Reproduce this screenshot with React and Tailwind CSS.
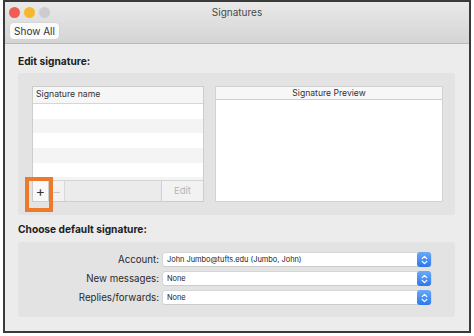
import React from "react";

const font = { fontFamily: '"Inter", "Liberation Sans", sans-serif' };

function Select({ value }) {
  return (
    <div className="flex h-[13px] w-[268px] items-center rounded-[2px] bg-white shadow-[0_0_0_0.5px_#c9c9c9,0_1px_0_#cfcfcf]">
      <span className="flex-1 truncate pl-[4px] text-[7.4px] leading-[13px] text-[#222]">{value}</span>
      <div className="flex h-[15px] w-[14px] items-center justify-center rounded-[3px] bg-gradient-to-b from-[#6aa9f8] to-[#2a78ee]">
        <svg width="7" height="10" viewBox="0 0 7 10" fill="none" stroke="white" strokeWidth="1.3" strokeLinecap="round" strokeLinejoin="round">
          <path d="M1.2 3.6 L3.5 1.4 L5.8 3.6" />
          <path d="M1.2 6.4 L3.5 8.6 L5.8 6.4" />
        </svg>
      </div>
    </div>
  );
}

export default function App() {
  const rows = [
    { h: "h-[15px]", bg: "bg-white" },
    { h: "h-[14px]", bg: "bg-[#f4f4f4]" },
    { h: "h-[15px]", bg: "bg-white" },
    { h: "h-[15px]", bg: "bg-[#f4f4f4]" },
    { h: "h-[14px]", bg: "bg-white" },
    { h: "h-[3px]", bg: "bg-[#f4f4f4]" },
  ];
  return (
    <div className="h-[336px] w-[474px] bg-white" style={font}>
      <div className="ml-[3px] flex h-[333px] w-[468px] flex-col border-2 border-[#3a3a3a] bg-[#ececec]">
        {/* Title + toolbar */}
        <div className="flex h-[42px] flex-col border-b border-[#b9b9b9] bg-gradient-to-b from-[#e9e9e9] to-[#d4d4d4]">
          <div className="grid h-[19px] grid-cols-[1fr_auto_1fr] items-center">
            <div className="flex gap-[4px] pl-[4px] pt-[1px]">
              <span className="h-[11px] w-[11px] rounded-full bg-[#f05b53]" />
              <span className="h-[11px] w-[11px] rounded-full bg-[#f6b730]" />
              <span className="h-[11px] w-[11px] rounded-full bg-[#cdcdcd]" />
            </div>
            <div className="text-[10px] leading-[16px] text-[#4a4a4a]">Signatures</div>
            <div />
          </div>
          <div className="flex pl-[5px] pt-[2px]">
            <div className="flex h-[16px] w-[49px] items-center justify-center rounded-[4px] bg-[#fbfbfb] text-[10px] text-[#333] shadow-[0_0_0_0.5px_#cfcfcf]">
              Show All
            </div>
          </div>
        </div>

        {/* Content */}
        <div className="flex flex-col pl-[13px] pr-[14px]">
          <div className="pt-[9px] text-[10.2px] font-bold leading-[16px] text-[#222]">Edit signature:</div>
          <div className="relative mt-[4px] flex h-[142px] gap-[11px] rounded-[3px] bg-[#e3e3e3] pl-[14px] pr-[12px] pt-[13px]">
            {/* Signature list */}
            <div className="flex h-[116px] w-[172px] flex-col border border-[#cdcdcd] bg-white">
              <div className="flex h-[17px] items-center border-b border-[#d6d6d6] bg-[#f6f6f6] pl-[3px] text-[8.7px] text-[#333]">
                Signature name
              </div>
              {rows.map((r, i) => (
                <div key={i} className={`${r.h} ${r.bg}`} />
              ))}
              <div className="flex flex-1 items-stretch border-t border-[#d4d4d4] bg-[#ebebeb]">
                <div className="flex w-[16px] items-center justify-center border-r border-[#cfcfcf] bg-[#f8f8f8] text-[14px] leading-none text-[#333]">
                  +
                </div>
                <div className="flex w-[16px] items-center justify-center border-r border-[#d8d8d8] bg-[#f2f2f2] text-[13px] leading-none text-[#c4c4c4]">
                  −
                </div>
                <div className="flex-1" />
                <div className="flex w-[42px] items-center justify-center border-l border-[#d0d0d0] bg-[#f2f2f2] text-[9.5px] text-[#b5b5b5]">
                  Edit
                </div>
              </div>
            </div>
            {/* Preview */}
            <div className="flex h-[116px] w-[228px] flex-col border border-[#d2d2d2] bg-white">
              <div className="flex h-[13px] items-center justify-center border-b border-[#cfcfcf] bg-[#f7f7f7] text-[8.6px] text-[#333]">
                Signature Preview
              </div>
              <div className="flex-1" />
            </div>
            {/* Highlight */}
            <div className="absolute left-[7px] top-[104px] h-[35px] w-[28px] border-4 border-[#ec7a2c]" />
          </div>

          <div className="mt-[6px] text-[10.2px] font-bold leading-[16px] text-[#222]">Choose default signature:</div>
          <div className="mt-[5px] flex h-[75px] flex-col gap-[6px] rounded-[3px] bg-[#e3e3e3] pt-[11px]">
            {[
              ["Account:", "John Jumbo@tufts.edu (Jumbo, John)"],
              ["New messages:", "None"],
              ["Replies/forwards:", "None"],
            ].map(([label, value]) => (
              <div key={label} className="flex h-[13px] items-center gap-[4px]">
                <div className="w-[141px] text-right text-[9.7px] leading-[13px] text-[#2a2a2a]">{label}</div>
                <Select value={value} />
              </div>
            ))}
          </div>
        </div>
      </div>
    </div>
  );
}
